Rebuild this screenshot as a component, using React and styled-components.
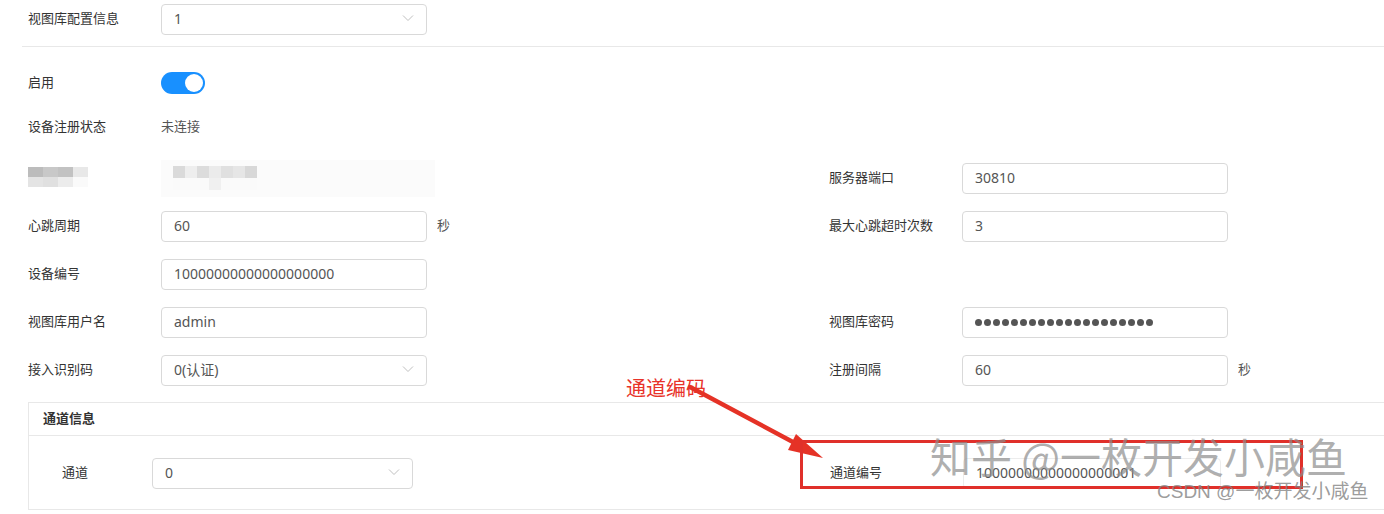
import React from "react";
import styled, { createGlobalStyle } from "styled-components";

const GlobalStyle = createGlobalStyle`
  html, body {
    margin: 0;
    padding: 0;
    background: #fff;
    overflow: hidden;
  }
  body {
    font-family: "Noto Sans", "Noto Sans CJK SC", sans-serif;
    font-size: 14px;
    color: #333;
  }
`;

const Page = styled.div`
  position: relative;
  width: 1384px;
  height: 514px;
  overflow: hidden;
`;

const Form = styled.div`
  padding-left: 28px;
`;

const Row = styled.div`
  display: flex;
  align-items: center;
  height: ${(p) => p.h || 48}px;
`;

const Field = styled.div`
  display: flex;
  align-items: center;
  width: ${(p) => p.w || "auto"};
`;

const Label = styled.div`
  width: ${(p) => p.w || 133}px;
  padding-left: ${(p) => p.pl || 0}px;
  padding-bottom: 3px;
  box-sizing: border-box;
  flex-shrink: 0;
  font-family: "Noto Sans CJK SC", sans-serif;
  font-size: 13px;
  color: #333;
  font-weight: ${(p) => (p.bold ? 600 : 400)};
`;

const Input = styled.div`
  width: ${(p) => p.w || 266}px;
  height: ${(p) => p.h || 31}px;
  box-sizing: border-box;
  border: 1px solid ${(p) => (p.faint ? "#ececec" : "#d9d9d9")};
  border-radius: 4px;
  display: flex;
  align-items: center;
  justify-content: space-between;
  padding: 0 12px 2px 12px;
  font-family: "Noto Sans", "Noto Sans CJK SC", sans-serif;
  font-size: 14px;
  color: #555;
  background: #fff;
  flex-shrink: 0;
`;

const Suffix = styled.span`
  margin-left: 10px;
  padding-bottom: 3px;
  font-family: "Noto Sans CJK SC", sans-serif;
  font-size: 13px;
  color: #555;
`;

const Plain = styled.span`
  padding-bottom: 3px;
  font-family: "Noto Sans CJK SC", sans-serif;
  font-size: 13px;
  color: #555;
`;

const Divider = styled.div`
  margin: 8px 0 0 -6px;
  border-top: 1px solid #e8e8e8;
`;

const Switch = styled.div`
  width: 44px;
  height: 22px;
  border-radius: 11px;
  background: #1890ff;
  position: relative;
  &::after {
    content: "";
    position: absolute;
    right: 2px;
    top: 2px;
    width: 18px;
    height: 18px;
    border-radius: 50%;
    background: #fff;
  }
`;

const Mosaic = styled.div`
  display: grid;
  grid-template-columns: repeat(${(p) => p.cols}, ${(p) => p.cell}px);
  grid-auto-rows: ${(p) => p.rh}px;
`;

const Cell = styled.div`
  background: ${(p) => p.c};
`;

const Blurred = styled.div`
  width: 274px;
  height: 37px;
  background: #fbfbfb;
  display: flex;
  align-items: center;
  padding-left: 12px;
  box-sizing: border-box;
`;

const Dots = styled.div`
  display: flex;
  gap: 2px;
  padding-top: 2px;
`;

const Dot = styled.span`
  width: 7px;
  height: 7px;
  border-radius: 50%;
  background: #555;
`;

const Section = styled.div`
  margin-top: 8px;
  width: 1400px;
  border: 1px solid #e8e8e8;
`;

const SectionHead = styled.div`
  height: 33px;
  display: flex;
  align-items: center;
  padding: 0 0 3px 14px;
  box-sizing: border-box;
  border-bottom: 1px solid #e8e8e8;
  font-family: "Noto Sans CJK SC", sans-serif;
  font-size: 13px;
  font-weight: 600;
  color: #333;
`;

const SectionBody = styled.div`
  padding: 21px 0 20px 0;
`;

const Note = styled.div`
  position: absolute;
  left: 626px;
  top: 373px;
  font-family: "Noto Sans CJK SC", sans-serif;
  font-size: 20px;
  color: #e8332a;
`;

const RedBox = styled.div`
  position: absolute;
  left: 800px;
  top: 440px;
  width: 503px;
  height: 49px;
  box-sizing: border-box;
  border: 3px solid #e0302a;
`;

const Arrow = styled.svg`
  position: absolute;
  left: 0;
  top: 0;
  pointer-events: none;
`;

const Watermark = styled.div`
  position: absolute;
  left: 930px;
  top: 428px;
  font-family: "Noto Sans CJK SC", sans-serif;
  font-size: 41px;
  line-height: 54px;
  color: rgba(140, 140, 140, 0.7);
  white-space: nowrap;
`;

const Credit = styled.div`
  position: absolute;
  left: 1157px;
  top: 480px;
  font-family: "Liberation Sans", "Noto Sans CJK SC", sans-serif;
  font-size: 19px;
  line-height: 24px;
  color: rgba(130, 130, 130, 0.8);
  white-space: nowrap;
`;

const Chevron = () => (
  <svg width="12" height="8" viewBox="0 0 12 8">
    <path d="M1 1.5 L6 6.5 L11 1.5" fill="none" stroke="#c0c0c0" strokeWidth="1" />
  </svg>
);

const Select = ({ value, w }) => (
  <Input w={w}>
    <span>{value}</span>
    <Chevron />
  </Input>
);

const labelMosaic = ["#bcbcbc", "#c8c8c8", "#c2c2c2", "#e8e8e8", "#e4e4e4", "#e0e0e0", "#ececec", "#fafafa"];
const valueMosaic = [
  "#dadada", "#eeeeee", "#dcdcdc", "#ebebeb", "#e0e0e0", "#e6e6e6", "#d8d8d8",
  "#fafafa", "#fafafa", "#fafafa", "#f0f0f0", "#fafafa", "#fafafa", "#fafafa",
];

export default function App() {
  return (
    <Page>
      <GlobalStyle />
      <Form>
        <Row h={38}>
          <Label>视图库配置信息</Label>
          <Select value="1" />
        </Row>
        <Divider />
        <div style={{ height: 14 }} />
        <Row h={44}>
          <Label>启用</Label>
          <Switch />
        </Row>
        <Row h={44}>
          <Label>设备注册状态</Label>
          <Plain>未连接</Plain>
        </Row>
        <div style={{ height: 5 }} />
        <Row>
          <Field w="801px">
            <Label>
              <Mosaic cols={4} cell={15} rh={10}>
                {labelMosaic.map((c, i) => (
                  <Cell key={i} c={c} />
                ))}
              </Mosaic>
            </Label>
            <Blurred>
              <Mosaic cols={7} cell={12} rh={12}>
                {valueMosaic.map((c, i) => (
                  <Cell key={i} c={c} />
                ))}
              </Mosaic>
            </Blurred>
          </Field>
          <Field>
            <Label>服务器端口</Label>
            <Input>30810</Input>
          </Field>
        </Row>
        <Row>
          <Field w="801px">
            <Label>心跳周期</Label>
            <Input>60</Input>
            <Suffix>秒</Suffix>
          </Field>
          <Field>
            <Label>最大心跳超时次数</Label>
            <Input>3</Input>
          </Field>
        </Row>
        <Row>
          <Field w="801px">
            <Label>设备编号</Label>
            <Input>10000000000000000000</Input>
          </Field>
        </Row>
        <Row>
          <Field w="801px">
            <Label>视图库用户名</Label>
            <Input>admin</Input>
          </Field>
          <Field>
            <Label>视图库密码</Label>
            <Input>
              <Dots>
                {Array.from({ length: 20 }).map((_, i) => (
                  <Dot key={i} />
                ))}
              </Dots>
            </Input>
          </Field>
        </Row>
        <Row>
          <Field w="801px">
            <Label>接入识别码</Label>
            <Select value="0(认证)" />
          </Field>
          <Field>
            <Label>注册间隔</Label>
            <Input>60</Input>
            <Suffix>秒</Suffix>
          </Field>
        </Row>
        <Section>
          <SectionHead>通道信息</SectionHead>
          <SectionBody>
            <Row h={32}>
              <Field w="801px">
                <Label w={123} pl={33}>通道</Label>
                <Select value="0" w={261} />
              </Field>
              <Field>
                <Label w={133}>通道编号</Label>
                <Input w={258} faint>
                  10000000000000000001
                </Input>
              </Field>
            </Row>
          </SectionBody>
        </Section>
      </Form>

      <Note>通道编码</Note>
      <Arrow width="1384" height="514" viewBox="0 0 1384 514">
        <line x1="690" y1="387" x2="806" y2="449" stroke="#e53226" strokeWidth="4.5" strokeLinecap="round" />
        <polygon points="823,458 796,434 788,450" fill="#e53226" />
      </Arrow>
      <RedBox />
      <Watermark>知乎 @一枚开发小咸鱼</Watermark>
      <Credit>CSDN @一枚开发小咸鱼</Credit>
    </Page>
  );
}
